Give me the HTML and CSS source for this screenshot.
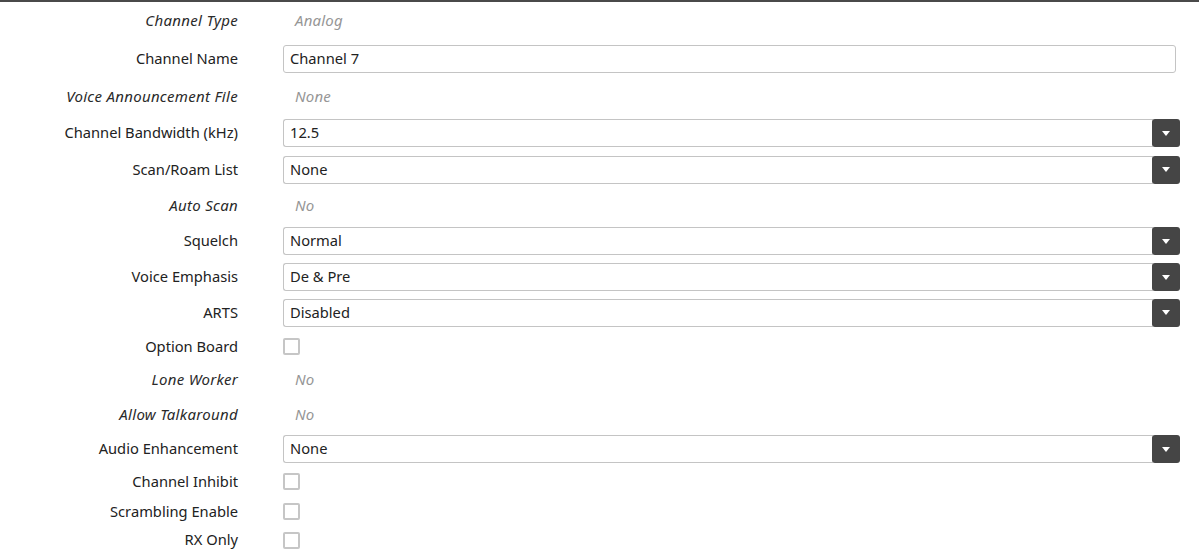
FILE: index.html
```html
<!DOCTYPE html>
<html lang="en">
<head>
<meta charset="utf-8">
<title>Channel Settings</title>
<link rel="stylesheet" href="styles.css">
</head>
<body>
<div class="form">
  <div class="label ro">Channel Type</div>
  <div class="cell"><span class="value">Analog</span></div>

  <div class="label">Channel Name</div>
  <div class="cell"><div class="input">Channel 7</div></div>

  <div class="label ro">Voice Announcement File</div>
  <div class="cell"><span class="value">None</span></div>

  <div class="label">Channel Bandwidth (kHz)</div>
  <div class="cell"><div class="select"><div class="select-box">12.5</div><div class="select-btn"><span class="tri"></span></div></div></div>

  <div class="label">Scan/Roam List</div>
  <div class="cell"><div class="select"><div class="select-box">None</div><div class="select-btn"><span class="tri"></span></div></div></div>

  <div class="label ro">Auto Scan</div>
  <div class="cell"><span class="value">No</span></div>

  <div class="label">Squelch</div>
  <div class="cell"><div class="select"><div class="select-box">Normal</div><div class="select-btn"><span class="tri"></span></div></div></div>

  <div class="label">Voice Emphasis</div>
  <div class="cell"><div class="select"><div class="select-box">De &amp; Pre</div><div class="select-btn"><span class="tri"></span></div></div></div>

  <div class="label">ARTS</div>
  <div class="cell"><div class="select"><div class="select-box">Disabled</div><div class="select-btn"><span class="tri"></span></div></div></div>

  <div class="label">Option Board</div>
  <div class="cell"><span class="check"></span></div>

  <div class="label ro">Lone Worker</div>
  <div class="cell"><span class="value">No</span></div>

  <div class="label ro">Allow Talkaround</div>
  <div class="cell"><span class="value">No</span></div>

  <div class="label">Audio Enhancement</div>
  <div class="cell"><div class="select"><div class="select-box">None</div><div class="select-btn"><span class="tri"></span></div></div></div>

  <div class="label">Channel Inhibit</div>
  <div class="cell"><span class="check"></span></div>

  <div class="label">Scrambling Enable</div>
  <div class="cell"><span class="check"></span></div>

  <div class="label">RX Only</div>
  <div class="cell"><span class="check"></span></div>
</div>
</body>
</html>
```

FILE: styles.css
```css
html, body {
  margin: 0;
  padding: 0;
  background: #ffffff;
}

body {
  font-family: "Noto Sans", "Open Sans", sans-serif;
  font-size: 14.7px;
  color: #222222;
  border-top: 2px solid #4a4a4a;
  width: 1199px;
  height: 555px;
  overflow: hidden;
}

.form {
  display: grid;
  grid-template-columns: 238px 897px;
  column-gap: 45px;
  grid-template-rows: 38px 38px 37px 36px 37px 35px 36px 36px 35px 33px 34px 35px 34px 31px 29px 28px;
}

.label {
  display: flex;
  align-items: center;
  justify-content: flex-end;
  white-space: nowrap;
  color: #222222;
  padding-bottom: 2px;
}

.label.ro {
  font-style: italic;
  font-size: 15px;
  letter-spacing: 0.3px;
  color: #2a2a2a;
}

.cell {
  display: flex;
  align-items: center;
}

.value {
  font-style: italic;
  font-size: 15px;
  letter-spacing: 0.2px;
  color: #969696;
  padding-left: 12px;
  padding-bottom: 2px;
}

.input {
  box-sizing: border-box;
  width: 893px;
  height: 28px;
  border: 1px solid #c4c4c4;
  border-radius: 3px;
  padding-left: 6px;
  padding-bottom: 2px;
  display: flex;
  align-items: center;
}

.select {
  display: flex;
  width: 897px;
  height: 28px;
}

.select-box {
  box-sizing: border-box;
  flex: 1;
  height: 28px;
  border: 1px solid #c4c4c4;
  border-right: none;
  border-radius: 3px 0 0 3px;
  padding-left: 6px;
  padding-bottom: 2px;
  display: flex;
  align-items: center;
}

.select-btn {
  width: 28px;
  height: 28px;
  background: #454545;
  border-radius: 3px;
  display: flex;
  align-items: center;
  justify-content: center;
  margin-left: -1px;
}

.tri {
  width: 0;
  height: 0;
  border-left: 4px solid transparent;
  border-right: 4px solid transparent;
  border-top: 5px solid #ffffff;
}

.check {
  box-sizing: border-box;
  width: 17px;
  height: 17px;
  border: 2px solid #c6c6c6;
  border-radius: 2px;
  background: #ffffff;
}
```
